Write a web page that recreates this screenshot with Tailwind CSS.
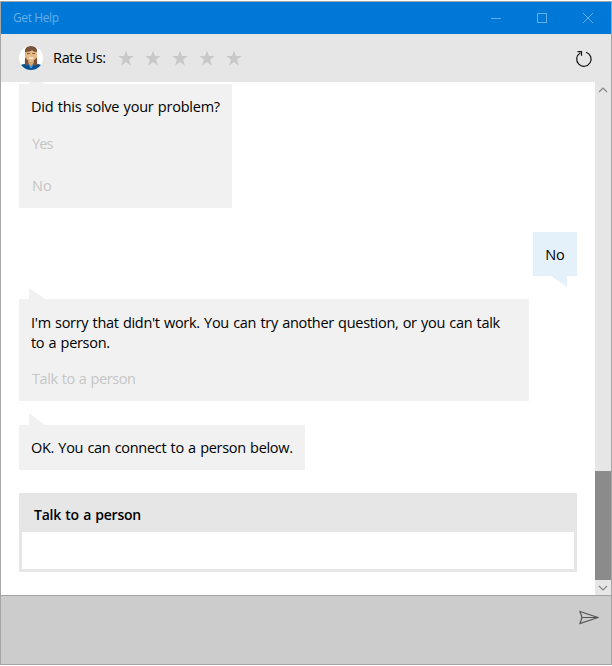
<!DOCTYPE html>
<html lang="en">
<head>
<meta charset="utf-8">
<title>Get Help</title>
<script src="https://cdn.jsdelivr.net/npm/@tailwindcss/browser@4"></script>
</head>
<body class="h-[666px] w-[612px] overflow-hidden bg-white pt-px font-['Open_Sans','Noto_Sans',sans-serif] text-[14.5px] leading-5 text-black">
<div class="flex h-[664px] w-[612px] flex-col border border-[#a6a6a6]">
  <!-- Title bar -->
  <header class="flex h-8 shrink-0 items-center justify-between bg-[#0078d7] pl-3 text-[#66aee7]">
    <h1 class="whitespace-nowrap text-[12px] leading-4 tracking-[-0.4px]">Get Help</h1>
    <div class="flex h-8">
      <svg class="h-8 w-[46px]" viewBox="0 0 46 32" fill="none" stroke="currentColor" shape-rendering="crispEdges"><path d="M18 16.5h10"/></svg>
      <svg class="h-8 w-[46px]" viewBox="0 0 46 32" fill="none" stroke="currentColor" shape-rendering="crispEdges"><path d="M18.500 11.500h9v9h-9z"/></svg>
      <svg class="h-8 w-[46px]" viewBox="0 0 46 32" fill="none" stroke="currentColor"><path d="M18 11l10 10M28 11l-10 10"/></svg>
    </div>
  </header>
  <!-- Rating bar -->
  <div class="flex h-12 shrink-0 items-center bg-[#e6e6e6] pl-[18px]">
    <svg class="size-6" viewBox="0 0 24 24">
      <defs><clipPath id="face"><circle cx="12" cy="12" r="12"/></clipPath></defs>
      <g clip-path="url(#face)">
        <path fill="#fff" d="M0 0h24v24H0z"/>
        <path fill="#79523c" d="M6 19V5c0-3.500 2.500-5 6-5s6 1.500 6 5v14z"/>
        <path fill="#d9a573" d="M9 12h6v8H9z"/>
        <path fill="#e6b884" d="M6.200 6c3.500 0 6-.8 7-2 0 1.200 2 2 4.800 2v5c0 3-2.800 5-6 5s-6-2-6-5z"/>
        <path fill="#79523c" d="M8 7h2.700v1H8zM13.300 7H16v1h-2.700z"/>
        <path fill="#fff" d="M9.800 11.500h4.400v1.200H9.800z"/>
        <path fill="#005193" d="M1 24v-4c0-1 2-2 5-2l3.500-.5 2.500 3 2.500-3 3.500.5c3 0 5 1 5 2v4z"/>
        <path fill="#79523c" d="M6 11.500l3.300 3v5H5.800zM18 11.500l-3.300 3v5h3.500z"/>
        <path fill="#6aa3cd" d="M9.300 18h.8l1.900 3 1.900-3h.8l-2.200 4h-1z"/>
      </g>
    </svg>
    <span class="ml-[10px] w-[64.5px] whitespace-nowrap tracking-[-0.32px]">Rate Us:</span>
    <div class="flex gap-[11px] text-[#c8c8c8]">
      <svg class="size-4" viewBox="0 0 16 16" fill="currentColor"><path d="M8 .5l1.900 5.500H15.700l-4.600 3.600 1.700 5.900L8 12l-4.800 3.500 1.700-5.900L.3 6h5.800z"/></svg>
      <svg class="size-4" viewBox="0 0 16 16" fill="currentColor"><path d="M8 .5l1.900 5.500H15.700l-4.600 3.600 1.700 5.900L8 12l-4.800 3.500 1.700-5.900L.3 6h5.800z"/></svg>
      <svg class="size-4" viewBox="0 0 16 16" fill="currentColor"><path d="M8 .5l1.900 5.500H15.700l-4.600 3.600 1.700 5.900L8 12l-4.800 3.500 1.700-5.900L.3 6h5.800z"/></svg>
      <svg class="size-4" viewBox="0 0 16 16" fill="currentColor"><path d="M8 .5l1.900 5.500H15.700l-4.600 3.600 1.700 5.900L8 12l-4.800 3.500 1.700-5.900L.3 6h5.800z"/></svg>
      <svg class="size-4" viewBox="0 0 16 16" fill="currentColor"><path d="M8 .5l1.900 5.500H15.700l-4.600 3.600 1.700 5.900L8 12l-4.800 3.500 1.700-5.900L.3 6h5.800z"/></svg>
    </div>
    <svg class="mt-[2px] mr-[18px] ml-auto h-[18px] w-[18px]" viewBox="0 0 18 18" fill="none" stroke="#111" stroke-width="1.200"><path d="M11 2.200A7.200 7.200 0 1 1 5.200 2.900"/><path d="M2.500 1.700h4v4"/></svg>
  </div>
  <!-- Conversation -->
  <div class="flex h-[513px] shrink-0">
    <main class="flex h-full w-[594px] flex-col pr-[18px] pl-[18px] [word-spacing:0.8px]">
      <svg class="ml-[10px] h-[2px] w-4 shrink-0" viewBox="0 0 16 2" fill="#f1f1f1"><path d="M0 0h13l3 2H0z"/></svg>
      <section class="h-[124px] w-[213px] shrink-0 bg-[#f1f1f1] px-3 pt-[13px]">
        <p class="whitespace-nowrap tracking-[-0.23px]">Did this solve your problem?</p>
        <p class="mt-[17px] ml-px tracking-[-0.9px] text-[#c6c6c6]">Yes</p>
        <p class="mt-[22px] ml-px text-[#c6c6c6]">No</p>
      </section>
      <section class="mt-6 flex h-11 w-11 shrink-0 items-center justify-center self-end bg-[#e4f1fb] pt-[2px]">No</section>
      <svg class="mr-[10px] h-[11px] w-4 shrink-0 self-end" viewBox="0 0 16 11"><path fill="#e4f1fb" d="M0 0h16v11z"/></svg>
      <svg class="mt-px ml-[10px] h-[11px] w-4 shrink-0" viewBox="0 0 16 11" fill="#f1f1f1"><path d="M0 0l16 11H0z"/></svg>
      <section class="h-[102px] w-[510px] shrink-0 bg-[#f1f1f1] px-3 pt-[14px]">
        <p class="whitespace-nowrap tracking-[-0.3px]">I'm sorry that didn't work. You can try another question, or you can talk<br>to a person.</p>
        <p class="mt-4 ml-px tracking-[-0.44px] text-[#c6c6c6]">Talk to a person</p>
      </section>
      <svg class="mt-3 ml-[10px] h-3 w-4 shrink-0" viewBox="0 0 16 12" fill="#f1f1f1"><path d="M0 0l16 12H0z"/></svg>
      <section class="h-[45px] w-[286px] shrink-0 bg-[#f1f1f1] px-3 pt-[13px]">
        <p class="whitespace-nowrap tracking-[-0.3px]">OK. You can connect to a person below.</p>
      </section>
      <section class="mt-[23px] h-[79px] w-[558px] shrink-0 border-[3px] border-t-0 border-[#e6e6e6]">
        <h2 class="h-[39px] bg-[#e6e6e6] pt-3 pl-3 text-[14px] font-semibold tracking-[-0.22px]">Talk to a person</h2>
      </section>
    </main>
    <div class="flex h-full w-4 flex-col bg-[#e6e6e6]">
      <svg class="size-4 shrink-0" viewBox="0 0 16 16" fill="none" stroke="#858585" stroke-width="1.200"><path d="M4 10l4-4 4 4"/></svg>
      <div class="mt-[373px] h-[109px] bg-[#8b8b8b]"></div>
      <svg class="h-[15px] w-4 shrink-0" viewBox="0 0 16 15" fill="none" stroke="#858585" stroke-width="1.200"><path d="M4 6l4 4 4-4"/></svg>
    </div>
  </div>
  <!-- Composer -->
  <footer class="flex flex-1 items-start justify-end border-t border-[#a3a3a3] bg-[#cccccc] pt-[14px] pr-3">
    <svg class="h-[15px] w-5" viewBox="0 0 20 15" fill="none" stroke="#555" stroke-width="1.200"><path d="M1 1.500L19 7.500 1 13.500 3 7.500zM3 7.500h15"/></svg>
  </footer>
</div>
</body>
</html>
